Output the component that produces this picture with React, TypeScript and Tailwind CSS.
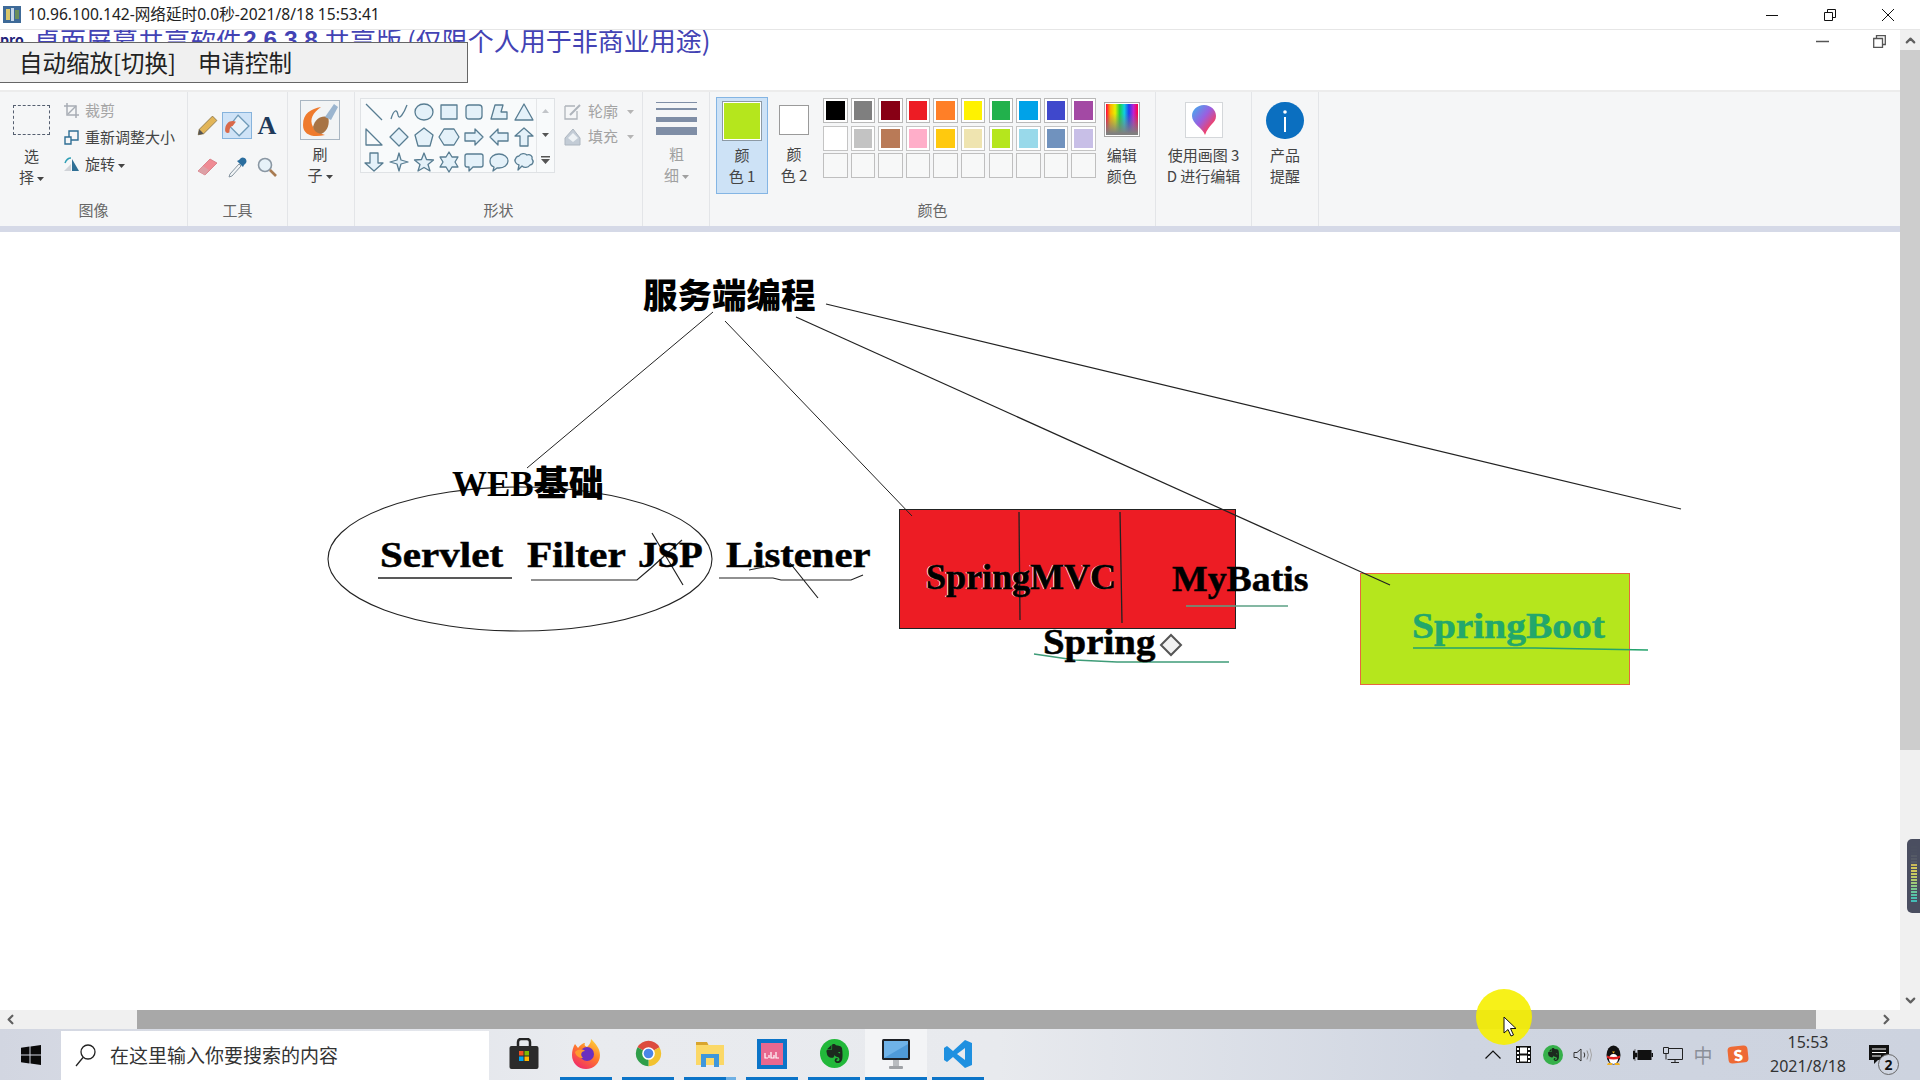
import { ChevronDown, ChevronLeft, ChevronRight, ChevronUp } from "lucide-react";
import { SiEvernote } from "react-icons/si";

const paletteTop = ["#000000", "#7f7f7f", "#880015", "#ed1c24", "#ff7f27", "#fff200", "#22b14c", "#00a2e8", "#3f48cc", "#a349a4"];
const paletteMid = ["#ffffff", "#c3c3c3", "#b97a57", "#ffaec9", "#ffc90e", "#efe4b0", "#b5e61d", "#99d9ea", "#7092be", "#c8bfe7"];

const shapes = [
  "M3 3L19 19",
  "M3 18C6 8 9 8 10 14S16 12 19 4",
  "M11 3C16 3 20 6.5 20 11S16 19 11 19S2 15.500 2 11S6 3 11 3Z",
  "M3 4H19V18H3Z",
  "M6 4H16Q19 4 19 7V15Q19 18 16 18H6Q3 18 3 15V7Q3 4 6 4Z",
  "M3 18L7 4H15L13 11H19V18Z",
  "M11 3L20 19H2Z",
  "M3 3V19H19Z",
  "M11 2L20 11L11 20L2 11Z",
  "M11 2L20 9L17 20H5L2 9Z",
  "M6 3H16L21 11L16 19H6L1 11Z",
  "M2 7H12V3L20 11L12 19V15H2Z",
  "M20 7H10V3L2 11L10 19V15H20Z",
  "M11 2L20 10H15V20H7V10H2Z",
  "M7 2H15V12H20L11 20L2 12H7Z",
  "M11 2L13 9L20 11L13 13L11 20L9 13L2 11L9 9Z",
  "M11 2L13.500 8.500L20.500 9L15 13.500L17 20L11 16.500L5 20L7 13.500L1.500 9L8.500 8.500Z",
  "M11 1L14 6H20L17 11L20 16H14L11 21L8 16H2L5 11L2 6H8Z",
  "M4 3H18Q20 3 20 5V14Q20 16 18 16H10L6 20V16H4Q2 16 2 14V5Q2 3 4 3Z",
  "M11 3C16 3 20 6 20 10S16 17 11 17H9L5 20L6 16C3 15 2 12 2 10C2 6 6 3 11 3Z",
  "M6 5C8 2 12 2 14 4C17 3 20 5 19 8C21 10 20 14 17 14C15 17 11 17 9 15L5 19L6 14C2 13 1 9 3 7C3 6 5 5 6 5Z",
];

const meterBars = ["#4b5060", "#4b5060", "#4b5060", "#555a66", "#555a66", "#555a66", "#c9b95a", "#d2c65a", "#d0c95c", "#c8cc60", "#bccb66", "#aecb6e", "#9fcb78", "#8ecb84", "#7ac990", "#68c69c", "#58c3a6", "#4cbfae", "#44bcb6"];

function Caret({ color = "#444444" }: { color?: string }) {
  return (
    <svg width="7" height="4" viewBox="0 0 7 4" className="inline-block ml-[3px] align-middle">
      <path d="M0 0H7L3.500 4Z" fill={color} />
    </svg>
  );
}

function Group({ label, width, children }: { label?: string; width: string; children: React.ReactNode }) {
  return (
    <div className={`flex flex-col h-full border-r border-[#e3e5e8] shrink-0 ${width}`}>
      <div className="h-[102px] flex">{children}</div>
      <div className="h-[32px] flex items-center justify-center text-[15px] text-[#666666]">{label}</div>
    </div>
  );
}

function TwoLine({ a, b, caret, muted }: { a: string; b: string; caret?: boolean; muted?: boolean }) {
  return (
    <div className={`flex flex-col items-center text-[15px] leading-[21px] whitespace-nowrap ${muted ? "text-[#a0a0a0]" : "text-[#444444]"}`}>
      <span>{a}</span>
      <span>
        {b}
        {caret && <Caret color={muted ? "#a0a0a0" : "#444444"} />}
      </span>
    </div>
  );
}

function ToolCell({ active, children }: { active?: boolean; children: React.ReactNode }) {
  return (
    <div className={`w-[30px] h-[27px] flex items-center justify-center ${active ? "bg-[#cfe3f7] border border-[#86b3dc]" : ""}`}>
      {children}
    </div>
  );
}

function Ribbon() {
  return (
    <div className="h-[136px] shrink-0 flex bg-[#f5f6f7] border-t-2 border-[#ececec] font-['Noto_Sans_CJK_SC',sans-serif]">
      <Group label="图像" width="w-[188px]">
        <div className="w-[37px] ml-[13px] pt-[13px] flex flex-col items-center">
          <div className="w-[37px] h-[30px] border border-dashed border-[#555f70] shrink-0" />
          <div className="mt-[10px]">
            <TwoLine a="选" b="择" caret />
          </div>
        </div>
        <div className="ml-[13px] pt-[5px] flex flex-col text-[15px] text-[#444444]">
          <div className="h-[27px] flex items-center gap-[5px] text-[#a5a5a5]">
            <svg width="17" height="17" viewBox="0 0 17 17" fill="none" stroke="#a8adb5" strokeWidth="1.500">
              <path d="M4 1V13H16M1 4H13V16" />
              <path d="M5 12L13 4" />
            </svg>
            裁剪
          </div>
          <div className="h-[27px] flex items-center gap-[5px] whitespace-nowrap">
            <svg width="17" height="17" viewBox="0 0 17 17" fill="none" stroke="#2f6f95" strokeWidth="1.400">
              <path d="M6 2H15V11H6Z" fill="#f5f6f7" />
              <path d="M2 8H8V15H2Z" fill="#f5f6f7" />
            </svg>
            重新调整大小
          </div>
          <div className="h-[27px] flex items-center gap-[5px]">
            <svg width="17" height="17" viewBox="0 0 17 17">
              <path d="M9 3L16 15H9Z" fill="#2f6f95" />
              <path d="M8 8L8 15H1Z" fill="#d0d3d8" />
              <path d="M2 7Q4 2 8 2" fill="none" stroke="#2f9fb5" strokeWidth="1.500" />
            </svg>
            <span>
              旋转
              <Caret />
            </span>
          </div>
        </div>
      </Group>

      <Group label="工具" width="w-[100px]">
        <div className="pl-[4px] pt-[20px] grid grid-cols-[30px_30px_30px] grid-rows-[27px_27px] gap-y-[14px]">
          <ToolCell>
            <svg width="22" height="22" viewBox="0 0 20 20">
              <path d="M15 1L19 5L7 17L2 18L3 13Z" fill="#e2b558" stroke="#8a7850" strokeWidth="0.800" />
              <path d="M2 18L3 13L7 17Z" fill="#555555" />
            </svg>
          </ToolCell>
          <ToolCell active>
            <svg width="26" height="24" viewBox="0 0 24 22">
              <path d="M13 1L23 11L14 20L5 11Z" fill="#e8f2fa" stroke="#6f9ab8" strokeWidth="1.200" />
              <path d="M1 15C1 8 6 5 11 7L8 11C6 11 5 13 5 17C3 18 1 17 1 15Z" fill="#d9694a" />
            </svg>
          </ToolCell>
          <ToolCell>
            <span className="font-['Liberation_Serif',serif] font-bold text-[26px] leading-none text-[#1f3a5a]">A</span>
          </ToolCell>
          <ToolCell>
            <svg width="24" height="20" viewBox="0 0 24 20">
              <path d="M15 2L22 6L10 18L3 14Z" fill="#ef8b94" stroke="#d4767f" strokeWidth="0.800" />
              <path d="M3 14L8 9L14 13L10 18Z" fill="#dda0a6" />
            </svg>
          </ToolCell>
          <ToolCell>
            <svg width="22" height="22" viewBox="0 0 22 22">
              <path d="M13 8L4 18L3 21L6 20L15 10Z" fill="#f2f5f7" stroke="#7a8a96" strokeWidth="0.900" />
              <path d="M12 6L17 11L18 9L20 7C22 4 18 0 15 2L13 4L11 5Z" fill="#2a6d9e" />
            </svg>
          </ToolCell>
          <ToolCell>
            <svg width="22" height="22" viewBox="0 0 22 22" fill="none">
              <circle cx="9" cy="9" r="6.500" fill="#e6f1f8" stroke="#8a97a3" strokeWidth="1.600" />
              <path d="M14 14L20 20" stroke="#a87b52" strokeWidth="2.600" />
            </svg>
          </ToolCell>
        </div>
      </Group>

      <Group width="w-[67px]">
        <div className="ml-[12px] pt-[8px] w-[40px] flex flex-col items-center">
          <div className="w-[40px] h-[40px] shrink-0 border border-[#a9b6c2] bg-[#f2f4f5] flex items-center justify-center">
            <svg width="38" height="38" viewBox="0 0 38 38">
              <path d="M2 24C2 12 10 8 20 6C12 12 8 18 12 26C14 30 18 32 24 34C12 37 2 34 2 24Z" fill="#ef7b2e" />
              <path d="M12 26C14 18 20 14 27 16C29 22 27 30 20 33C16 32 13 30 12 26Z" fill="#a87445" />
              <path d="M24 16L33 3L37 6L30 19Z" fill="#9bb5cf" />
            </svg>
          </div>
          <div className="mt-[3px]">
            <TwoLine a="刷" b="子" caret />
          </div>
        </div>
      </Group>

      <Group label="形状" width="w-[288px]">
        <div className="ml-[5px] mt-[6px] h-[75px] flex border border-[#dfe2e5] bg-[#f8fafb] shrink-0">
          <div className="grid grid-cols-[repeat(7,25px)] grid-rows-[repeat(3,25px)] w-[175px]">
            {shapes.map((d) => (
              <div key={d} className="flex items-center justify-center">
                <svg width="22" height="22" viewBox="0 0 22 22" fill={d.length < 12 ? "none" : "#e4f1f9"} stroke="#587d92" strokeWidth="1.300" strokeLinejoin="round">
                  <path d={d} fill={d.startsWith("M3 18C") ? "none" : undefined} />
                </svg>
              </div>
            ))}
          </div>
          <div className="w-[18px] ml-auto border-l border-[#e4e6e8] flex flex-col items-center">
            <div className="h-[25px] flex items-center">
              <svg width="7" height="4" viewBox="0 0 7 4"><path d="M0 4H7L3.500 0Z" fill="#c2c5c9" /></svg>
            </div>
            <div className="h-[25px] flex items-center">
              <svg width="7" height="4" viewBox="0 0 7 4"><path d="M0 0H7L3.500 4Z" fill="#555555" /></svg>
            </div>
            <div className="h-[25px] flex items-center">
              <svg width="9" height="8" viewBox="0 0 9 8"><path d="M0 0H9V1.500H0ZM0 3H9L4.500 8Z" fill="#555555" /></svg>
            </div>
          </div>
        </div>
        <div className="ml-[9px] mt-[7px] flex flex-col text-[15px] text-[#a3a3a3]">
          <div className="h-[25px] flex items-center gap-[6px] whitespace-nowrap">
            <svg width="18" height="18" viewBox="0 0 18 18" fill="none" stroke="#aeb4bb" strokeWidth="1.300">
              <path d="M1 3H11M1 3V16H13V8" />
              <path d="M6 12L16 2" strokeWidth="2" />
            </svg>
            轮廓
            <Caret color="#b5b5b5" />
          </div>
          <div className="h-[25px] flex items-center gap-[6px] whitespace-nowrap">
            <svg width="18" height="18" viewBox="0 0 18 18">
              <path d="M9 1L16 10V17H1V10Z" fill="#c3ccd6" stroke="#adb6c0" />
              <path d="M4 10L9 5L14 10L9 14Z" fill="#eef2f5" />
            </svg>
            填充
            <Caret color="#b5b5b5" />
          </div>
        </div>
      </Group>

      <Group width="w-[67px]">
        <div className="ml-[13px] pt-[10px] w-[41px] flex flex-col items-center">
          <div className="w-[41px] h-[33px] shrink-0 flex flex-col">
            <div className="h-px bg-[#7f8ea6]" />
            <div className="h-[2px] mt-[5px] bg-[#7f8ea6]" />
            <div className="h-[5px] mt-[7px] bg-[#7f8ea6]" />
            <div className="h-[8px] mt-[5px] bg-[#7f8ea6]" />
          </div>
          <div className="mt-[8px]">
            <TwoLine a="粗" b="细" caret muted />
          </div>
        </div>
      </Group>

      <Group label="颜色" width="w-[446px]">
        <div className="ml-[6px] mt-[5px] w-[52px] h-[97px] shrink-0 border border-[#84b5e4] bg-[#cde2f6] flex flex-col items-center pt-[3px]">
          <div className="w-[40px] h-[40px] shrink-0 border border-[#8d9aa5] bg-white p-[1px]">
            <div className="w-full h-full bg-[#b5e61d]" />
          </div>
          <div className="mt-[3px]">
            <TwoLine a="颜" b="色 1" />
          </div>
        </div>
        <div className="mt-[5px] w-[52px] flex flex-col items-center pt-[8px]">
          <div className="w-[30px] h-[30px] shrink-0 border border-[#9a9a9a] bg-white" />
          <div className="mt-[8px]">
            <TwoLine a="颜" b="色 2" />
          </div>
        </div>
        <div className="ml-[3px] pt-[6px] grid grid-cols-[repeat(10,24.500px)] grid-rows-[repeat(3,25px)] gap-x-[3.100px] gap-y-[2.500px]">
          {paletteTop.map((c) => (
            <div key={c} className="border border-[#b9b9b9] bg-white p-[2px]">
              <div className="w-full h-full" style={{ background: c }} />
            </div>
          ))}
          {paletteMid.map((c) => (
            <div key={c} className="border border-[#c4c4c4] bg-white p-[2px]">
              <div className="w-full h-full" style={{ background: c }} />
            </div>
          ))}
          {paletteTop.map((c) => (
            <div key={c} className="border border-[#bfbfbf] bg-[#f7f8f8]" />
          ))}
        </div>
        <div className="ml-[4px] w-[44px] pt-[10px] flex flex-col items-center">
          <div className="w-[36px] h-[35px] shrink-0 border border-[#a5a5a5] p-[1px] bg-white">
            <div className="w-full h-full bg-[linear-gradient(180deg,transparent_30%,#7f7f7f_95%),linear-gradient(90deg,#ff0040,#ffb000,#e8f000,#20d040,#10d0e0,#2040f0,#c020d0,#ff0040)]" />
          </div>
          <div className="mt-[7px]">
            <TwoLine a="编辑" b="颜色" />
          </div>
        </div>
      </Group>

      <Group width="w-[96px]">
        <div className="w-full pt-[10px] flex flex-col items-center">
          <div className="w-[38px] h-[36px] shrink-0 border border-[#d4d7da] bg-white flex items-center justify-center">
            <svg width="26" height="32" viewBox="0 0 26 32">
              <defs>
                <linearGradient id="drop" x1="0" y1="0" x2="1" y2="1">
                  <stop offset="0" stopColor="#38b6f0" />
                  <stop offset="0.450" stopColor="#9a5fe0" />
                  <stop offset="0.750" stopColor="#f0406a" />
                  <stop offset="1" stopColor="#f9a01e" />
                </linearGradient>
              </defs>
              <path d="M13 1C20 1 25 6 25 12C25 19 18 20 14 31C12 24 1 20 1 12C1 6 6 1 13 1Z" fill="url(#drop)" />
            </svg>
          </div>
          <div className="mt-[6px]">
            <TwoLine a="使用画图 3" b="D 进行编辑" />
          </div>
        </div>
      </Group>

      <Group width="w-[67px]">
        <div className="w-full pt-[10px] flex flex-col items-center">
          <div className="w-[38px] h-[37px] shrink-0 rounded-full bg-[#0b6fc0] flex items-center justify-center">
            <svg width="6" height="24" viewBox="0 0 6 24">
              <circle cx="3" cy="3" r="1.800" fill="#ffffff" />
              <rect x="2" y="8" width="2" height="15" fill="#ffffff" />
            </svg>
          </div>
          <div className="mt-[5px]">
            <TwoLine a="产品" b="提醒" />
          </div>
        </div>
      </Group>
    </div>
  );
}

function Drawing() {
  return (
    <div className="relative flex-1 bg-white overflow-hidden">
      <div className="absolute left-[899px] top-[277px] w-[337px] h-[120px] bg-[#ed1c24] border border-[#222222]" />
      <div className="absolute left-[1360px] top-[341px] w-[270px] h-[112px] bg-[#b5e61d] border border-[#e8663f]" />
      <svg className="absolute left-0 top-0 w-[1900px] h-[778px]" viewBox="0 232 1900 778" fill="none" stroke="#222222" strokeWidth="1">
        <path d="M713 312L527 468" />
        <path d="M725 321L912 516" />
        <path d="M796 317L1390 585" strokeWidth="1.200" />
        <path d="M826 304L1681 509" strokeWidth="1.200" />
        <ellipse cx="520" cy="559" rx="192" ry="72" strokeWidth="1.100" />
        <path d="M1019 512L1020 620M1120 512L1122 623" strokeWidth="1.300" />
        <path d="M378 578H512" strokeWidth="1.400" />
        <path d="M531 580H637L651 568L682 540M652 533L683 585" strokeWidth="1.200" />
        <path d="M719 578H773L781 580H851L863 575M749 570L769 566M790 563L818 598" strokeWidth="1.200" />
        <path d="M1186 606H1288" stroke="#5ba184" strokeWidth="1.400" />
        <path d="M1034 654L1075 660L1117 662H1229" stroke="#3f9c78" strokeWidth="1.400" />
        <path d="M1413 648H1535L1648 650" stroke="#24a36c" strokeWidth="1.500" />
        <path d="M1171 635L1181 645L1171 655L1161 645Z" fill="#f2f2f2" stroke="#555555" strokeWidth="2" />
      </svg>

      <div className="absolute left-[643px] top-[44px] text-[34.500px] leading-none font-black whitespace-nowrap text-black font-['Noto_Sans_CJK_SC',sans-serif]">服务端编程</div>
      <div className="absolute left-[452px] top-[235px] text-[35px] leading-none font-black whitespace-nowrap text-black font-['Liberation_Serif','Noto_Sans_CJK_SC',serif]">WEB基础</div>
      <div className="absolute left-[380px] top-[305px] origin-left scale-x-[1.140] text-[36px] leading-none font-bold text-black [-webkit-text-stroke:0.5px_#000000] font-['Liberation_Serif',serif]">Servlet</div>
      <div className="absolute left-[527px] top-[305px] origin-left scale-x-[1.150] text-[36px] leading-none font-bold text-black [-webkit-text-stroke:0.5px_#000000] font-['Liberation_Serif',serif]">Filter</div>
      <div className="absolute left-[638px] top-[305px] origin-left scale-x-[1.080] text-[36px] leading-none font-bold text-black [-webkit-text-stroke:0.5px_#000000] font-['Liberation_Serif',serif]">JSP</div>
      <div className="absolute left-[726px] top-[305px] origin-left scale-x-[1.130] text-[36px] leading-none font-bold text-black [-webkit-text-stroke:0.5px_#000000] font-['Liberation_Serif',serif]">Listener</div>
      <div className="absolute left-[926px] top-[327px] text-[36px] leading-none font-bold text-black [-webkit-text-stroke:0.5px_#000000] [text-shadow:-1px_0_0_#ffffff] font-['Liberation_Serif',serif]">SpringMVC</div>
      <div className="absolute left-[1172px] top-[329px] origin-left scale-x-[1.050] text-[36px] leading-none font-bold text-black [-webkit-text-stroke:0.5px_#000000] font-['Liberation_Serif',serif]">MyBatis</div>
      <div className="absolute left-[1043px] top-[392px] origin-left scale-x-[1.080] text-[36px] leading-none font-bold text-black [-webkit-text-stroke:0.5px_#000000] font-['Liberation_Serif',serif]">Spring</div>
      <div className="absolute left-[1412px] top-[376px] origin-left scale-x-[1.095] text-[36px] leading-none font-bold text-[#22a76c] [-webkit-text-stroke:0.5px_#22a76c] font-['Liberation_Serif',serif]">SpringBoot</div>
    </div>
  );
}

function TitleBar() {
  return (
    <div className="h-[30px] shrink-0 flex items-center bg-white border-b border-[#e6e6e6] font-['Noto_Sans','Noto_Sans_CJK_SC',sans-serif]">
      <svg width="18" height="17" viewBox="0 0 18 17" className="ml-[3px]">
        <rect x="0" y="0" width="18" height="17" fill="#3e6a98" />
        <rect x="3" y="3" width="4" height="11" fill="#d9c76a" />
        <rect x="8" y="2" width="3" height="13" fill="#c7d8e8" />
        <rect x="12" y="4" width="4" height="9" fill="#6a8f5a" />
      </svg>
      <span className="ml-[7px] text-[15.600px] text-[#222222] whitespace-nowrap">10.96.100.142-网络延时0.0秒-2021/8/18 15:53:41</span>
      <div className="ml-auto flex items-center gap-[46px] pr-[26px]">
        <svg width="12" height="12" viewBox="0 0 12 12"><path d="M0 6.500H12" stroke="#111111" strokeWidth="1" /></svg>
        <svg width="12" height="12" viewBox="0 0 12 12" fill="none" stroke="#111111" strokeWidth="1">
          <path d="M0.500 3.500H8.500V11.500H0.500Z" />
          <path d="M3.500 3V0.500H11.500V8.500H9" />
        </svg>
        <svg width="12" height="12" viewBox="0 0 12 12" stroke="#111111" strokeWidth="1"><path d="M0 0L12 12M12 0L0 12" /></svg>
      </div>
    </div>
  );
}

function SessionHeader() {
  return (
    <div className="relative h-[60px] shrink-0 bg-white overflow-hidden flex items-start font-['Noto_Sans_CJK_SC',sans-serif]">
      <div className="-mt-[3px] text-[26px] leading-[26px] text-[#4343b4] whitespace-nowrap flex">
        <span className="w-[34px] overflow-hidden text-[#23237a] text-[14px] leading-[24px] font-bold">pro</span>
        <span>桌面屏幕共享软件</span>
        <span className="ml-[1px] mr-[6px] text-[24.500px] font-bold font-['Liberation_Sans',sans-serif]">2.6.3.8</span>
        <span>共享版</span>
        <span className="ml-[5px]">(仅限个人用于非商业用途)</span>
      </div>
      <div className="ml-auto flex items-center gap-[44px] pt-[5px] pr-[14px] h-[18px]">
        <svg width="13" height="13" viewBox="0 0 13 13"><path d="M0 6.500H13" stroke="#555555" strokeWidth="1.500" /></svg>
        <svg width="13" height="13" viewBox="0 0 13 13" fill="none" stroke="#555555" strokeWidth="1.300">
          <path d="M0.700 3.500H9.500V12.300H0.700Z" />
          <path d="M3.500 3V0.700H12.300V9.500H10" />
        </svg>
      </div>
      <div className="absolute left-[-1px] top-[12px] w-[469px] h-[41px] bg-[#f0f0f0] border border-[#666666] flex items-center gap-[22px] pl-[19px] text-[23.500px] text-[#222222] whitespace-nowrap">
        <span>自动缩放[切换]</span>
        <span>申请控制</span>
      </div>
    </div>
  );
}

function VerticalScrollbar() {
  return (
    <div className="relative w-[20px] shrink-0 bg-[#f0f0f0] flex flex-col items-center">
      <div className="h-[20px] shrink-0 flex items-center">
        <ChevronUp size={15} strokeWidth={3.500} color="#606060" />
      </div>
      <div className="w-full h-[700px] shrink-0 bg-[#cdcdcd]" />
      <div className="mt-auto h-[20px] flex items-center">
        <ChevronDown size={15} strokeWidth={3.500} color="#606060" />
      </div>
      <div className="absolute right-0 top-[809px] w-[13px] h-[74px] rounded-l-[5px] bg-[#4a4e60] flex flex-col items-center gap-[1px] pt-[7px]">
        {meterBars.map((c, i) => (
          <div key={i} className="w-[6px] h-[2px]" style={{ background: c }} />
        ))}
      </div>
    </div>
  );
}

function AppCell({ bar, active, children }: { bar?: "full" | "split"; active?: boolean; children: React.ReactNode }) {
  return (
    <div className={`w-[62px] h-full shrink-0 flex flex-col ${active ? "bg-[#f3f4f6]" : ""}`}>
      <div className="flex-1 flex items-center justify-center pt-[1px]">{children}</div>
      <div className={`h-[3px] shrink-0 ${active ? "mx-0" : "mx-[5px]"} ${bar === "full" ? "bg-[#0b74c8]" : bar === "split" ? "bg-[linear-gradient(90deg,#0b74c8_80%,#6fb0e4_80%)]" : ""}`} />
    </div>
  );
}

function TrayCell({ children }: { children: React.ReactNode }) {
  return <div className="w-[30px] h-full shrink-0 flex items-center justify-center">{children}</div>;
}

function Taskbar() {
  return (
    <div className="h-[51px] shrink-0 flex items-stretch bg-[linear-gradient(90deg,#d2d6e1_0%,#e9ebef_30%,#e8eaee_52%,#cfd5e1_76%,#cdd3df_100%)] font-['Noto_Sans_CJK_SC',sans-serif]">
      <div className="w-[61px] shrink-0 flex items-center justify-center">
        <svg width="20" height="20" viewBox="0 0 20 20" fill="#0a0a0a">
          <path d="M0 2.800L8.500 1.600V9.500H0ZM9.500 1.500L20 0V9.500H9.500ZM0 10.500H8.500V18.400L0 17.200ZM9.500 10.500H20V20L9.500 18.500Z" />
        </svg>
      </div>
      <div className="w-[428px] shrink-0 mt-[2px] bg-white flex items-center pl-[14px] gap-[14px] text-[19px] text-[#333333] whitespace-nowrap">
        <svg width="21" height="23" viewBox="0 0 21 23" fill="none" stroke="#222222" strokeWidth="1.300">
          <circle cx="13" cy="8" r="7" />
          <path d="M8 13.500L1 22" />
        </svg>
        在这里输入你要搜索的内容
      </div>
      <div className="ml-[4px] flex h-full">
        <AppCell>
          <svg width="30" height="31" viewBox="0 0 30 31">
            <path d="M9 9V4Q9 1 12 1H18Q21 1 21 4V9" fill="none" stroke="#232323" strokeWidth="2.500" />
            <rect x="0.500" y="8" width="29" height="23" rx="2" fill="#2b2b2b" />
            <rect x="10" y="13" width="4.500" height="4.500" fill="#f25022" />
            <rect x="15.500" y="13" width="4.500" height="4.500" fill="#7fba00" />
            <rect x="10" y="18.500" width="4.500" height="4.500" fill="#00a4ef" />
            <rect x="15.500" y="18.500" width="4.500" height="4.500" fill="#ffb900" />
          </svg>
        </AppCell>
        <AppCell bar="full">
          <svg width="30" height="30" viewBox="0 0 30 30">
            <defs>
              <linearGradient id="fx" x1="0.800" y1="0" x2="0.200" y2="1">
                <stop offset="0" stopColor="#ffd23a" />
                <stop offset="0.450" stopColor="#ff7a2a" />
                <stop offset="1" stopColor="#f0256e" />
              </linearGradient>
            </defs>
            <path d="M20 0C24 4 29 9 29 16C29 24 23 30 15 30C7 30 1 24 1 16C1 12 2 8 4 5L7 9C9 6 12 4 14 4C13 6 14 7 16 8C18 6 20 4 20 0Z" fill="url(#fx)" />
            <circle cx="16" cy="15" r="7" fill="#6b2fc0" />
            <path d="M4 13C7 10 12 10 14 12C10 12 9 16 12 19C8 19 5 17 4 13Z" fill="#ff9a2e" />
          </svg>
        </AppCell>
        <AppCell bar="full">
          <svg width="29" height="29" viewBox="0 0 32 32">
            <path d="M16 16L3.880 9A14 14 0 0 1 28.120 9Z" fill="#dd4b3e" />
            <path d="M16 16L28.120 9A14 14 0 0 1 16 30Z" fill="#f2c230" />
            <path d="M16 16L16 30A14 14 0 0 1 3.880 9Z" fill="#2f9e4a" />
            <circle cx="16" cy="16" r="7" fill="#ffffff" />
            <circle cx="16" cy="16" r="5.300" fill="#4a86e8" />
          </svg>
        </AppCell>
        <AppCell bar="split">
          <svg width="28" height="28" viewBox="0 0 28 28">
            <path d="M0 2H11L13 6H0Z" fill="#d9a52e" />
            <rect x="0" y="5" width="28" height="20" fill="#fbd867" />
            <path d="M5 27V14H23V27H18V18H10V27Z" fill="#3f97dc" />
          </svg>
        </AppCell>
        <AppCell bar="full">
          <svg width="30" height="30" viewBox="0 0 30 30" fill="none">
            <rect width="30" height="30" fill="#0b74c8" />
            <rect x="4" y="4" width="22" height="22" fill="#e8688f" />
            <path d="M8 14V19H11M12 16V19M14 13V19H17V16M19 13V19H22" stroke="#ffffff" strokeWidth="1.200" />
          </svg>
        </AppCell>
        <AppCell bar="full">
          <div className="w-[29px] h-[29px] rounded-full bg-[#22b83a] flex items-center justify-center">
            <SiEvernote size={19} color="#1c2a1e" />
          </div>
        </AppCell>
        <AppCell bar="full" active>
          <svg width="28" height="30" viewBox="0 0 28 30">
            <rect x="0" y="0" width="28" height="21" rx="1.500" fill="#1d2026" />
            <rect x="2" y="2" width="24" height="17" fill="#6fb2e8" />
            <path d="M2 19L26 5V19Z" fill="#4f9ad9" />
            <rect x="11" y="21" width="6" height="6" fill="#b9bcc0" />
            <rect x="7" y="27" width="14" height="3" rx="1" fill="#9fa2a6" />
          </svg>
        </AppCell>
        <AppCell bar="full">
          <svg width="30" height="30" viewBox="0 0 30 30">
            <path d="M22 1L29 4V26L22 29L10 18L4 23L1 21V9L4 7L10 12ZM22 9L14 15L22 21Z" fill="#1e90e0" fillRule="evenodd" />
          </svg>
        </AppCell>
      </div>
      <div className="ml-auto flex h-full">
        <TrayCell>
          <svg width="16" height="9" viewBox="0 0 16 9" fill="none" stroke="#111111" strokeWidth="1.200"><path d="M0.500 8.500L8 1L15.500 8.500" /></svg>
        </TrayCell>
        <TrayCell>
          <svg width="15" height="17" viewBox="0 0 15 17">
            <rect width="15" height="17" fill="#111111" />
            <rect x="4" y="1.500" width="7" height="6" fill="#ffffff" />
            <rect x="4" y="9.500" width="7" height="6" fill="#ffffff" />
            <path d="M1 2H3V4H1ZM1 6H3V8H1ZM1 10H3V12H1ZM1 14H3V16H1ZM12 2H14V4H12ZM12 6H14V8H12ZM12 10H14V12H12ZM12 14H14V16H12Z" fill="#ffffff" />
          </svg>
        </TrayCell>
        <TrayCell>
          <div className="w-[20px] h-[20px] rounded-full bg-[#36b04a] flex items-center justify-center">
            <SiEvernote size={13} color="#1c2a1e" />
          </div>
        </TrayCell>
        <TrayCell>
          <svg width="20" height="16" viewBox="0 0 20 16" fill="none" stroke="#333333" strokeWidth="1">
            <path d="M1 5.500H4L8 2V14L4 10.500H1Z" />
            <path d="M11 5.500Q12.500 8 11 10.500" />
            <path d="M14 3.500Q16.500 8 14 12.500" stroke="#8a8a8a" />
            <path d="M17 1.500Q20 8 17 14.500" stroke="#a5a5a5" />
          </svg>
        </TrayCell>
        <TrayCell>
          <svg width="17" height="20" viewBox="0 0 17 20">
            <ellipse cx="8.500" cy="10" rx="7" ry="9.500" fill="#111111" />
            <ellipse cx="8.500" cy="14" rx="4.500" ry="5" fill="#ffffff" />
            <path d="M2 10.500Q8.500 13.500 15 10.500V13Q8.500 16 2 13Z" fill="#e02020" />
            <path d="M7 6.500L10 6.500L8.500 8.500Z" fill="#f2b01e" />
            <path d="M3 18H7V20H2ZM10 18H14L15 20H10Z" fill="#f2b01e" />
          </svg>
        </TrayCell>
        <TrayCell>
          <svg width="20" height="12" viewBox="0 0 20 12">
            <path d="M0 2H2V4H4V8H2V10H0ZM2 0V2M2 10V12" fill="#111111" stroke="#111111" strokeWidth="0.500" />
            <rect x="4.500" y="1" width="14" height="10" fill="#111111" />
            <rect x="18.500" y="4" width="1.500" height="4" fill="#111111" />
          </svg>
        </TrayCell>
        <TrayCell>
          <svg width="20" height="16" viewBox="0 0 20 16" fill="none" stroke="#222222" strokeWidth="1">
            <path d="M5.500 1.500H19.500V12.500H4.500" />
            <path d="M12 12.500V15.500M8 15.500H16" />
            <path d="M0.500 0.500H5.500V6.500H0.500ZM3 6.500V12.500" />
          </svg>
        </TrayCell>
        <TrayCell>
          <span className="text-[19px] leading-none text-[#8a8f98] font-normal">中</span>
        </TrayCell>
        <TrayCell>
          <span className="ml-[10px] w-[20px] h-[17px] bg-[#ee6a34] rounded-[4px] -rotate-6 flex items-center justify-center text-white text-[15px] leading-none font-black">S</span>
        </TrayCell>
      </div>
      <div className="ml-[16px] w-[88px] shrink-0 flex flex-col items-center pt-[1px] text-[16px] leading-[24px] text-[#333333] font-['Noto_Sans',sans-serif]">
        <span>15:53</span>
        <span>2021/8/18</span>
      </div>
      <div className="w-[68px] shrink-0 pl-[17px] pt-[16px]">
        <div className="relative w-[20px] h-[18px]">
          <svg width="20" height="20" viewBox="0 0 20 20">
            <path d="M0 0H20V15H9L5 19V15H0Z" fill="#111111" />
            <path d="M3 4H17M3 7.500H17M3 11H12" stroke="#ffffff" strokeWidth="1" />
          </svg>
          <span className="absolute left-[9px] top-[9px] w-[21px] h-[21px] rounded-full border border-[#666666] bg-[#cfd5e1] flex items-center justify-center text-[14px] leading-none font-bold text-[#111111] font-['Noto_Sans',sans-serif]">2</span>
        </div>
      </div>
    </div>
  );
}

export default function App() {
  return (
    <div className="relative w-[1920px] h-[1080px] overflow-hidden flex flex-col bg-white">
      <TitleBar />
      <div className="flex-1 min-h-0 flex">
        <div className="w-[1900px] flex flex-col">
          <SessionHeader />
          <Ribbon />
          <div className="h-[6px] shrink-0 bg-[#d5d9e7]" />
          <Drawing />
        </div>
        <VerticalScrollbar />
      </div>
      <div className="h-[19px] shrink-0 flex items-center bg-[#f0f0f0]">
        <div className="w-[137px] shrink-0 pl-[3px]">
          <ChevronLeft size={15} strokeWidth={3.500} color="#606060" />
        </div>
        <div className="w-[1679px] h-full shrink-0 bg-[#a8a8a8]" />
        <div className="ml-[63px]">
          <ChevronRight size={15} strokeWidth={3.500} color="#606060" />
        </div>
      </div>
      <Taskbar />

      {/* pointer highlight from the recording tool */}
      <div className="absolute left-[1476px] top-[989px] w-[56px] h-[56px] rounded-full bg-[#f6f000]/90" />
      <svg className="absolute left-[1503px] top-[1016px]" width="14" height="21" viewBox="0 0 14 21">
        <path d="M1 1V17L5 13.500L8 20L10.500 19L7.500 12.500H13Z" fill="#ffffff" stroke="#111111" strokeWidth="1" />
      </svg>
    </div>
  );
}
